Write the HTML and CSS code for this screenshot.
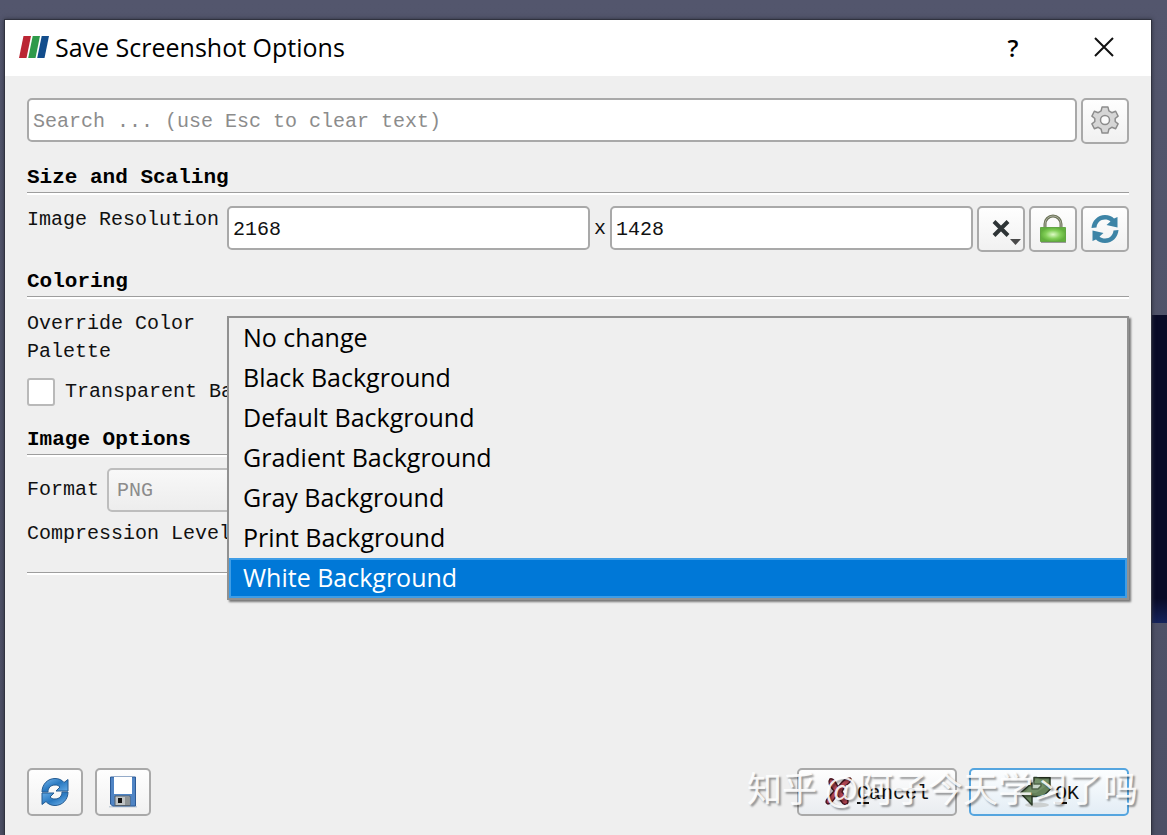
FILE: index.html
```html
<!DOCTYPE html>
<html lang="en">
<head>
<meta charset="utf-8">
<title>Save Screenshot Options</title>
<link rel="stylesheet" href="styles.css">
</head>
<body>
<div class="backdrop"></div>
<main class="dialog">
  <header class="titlebar">
    <svg class="logo" width="30" height="22" viewBox="0 0 30 22" aria-hidden="true">
      <path fill="#bb2634" d="M4.500 0H12L7.500 22H0z"/>
      <path fill="#2f9a4a" d="M13.700 0H21l-4.500 22H9.200z"/>
      <path fill="#124d8c" d="M22.700 0H30l-4.500 22h-7.300z"/>
    </svg>
    <h1 class="title">Save Screenshot Options</h1>
    <button class="caption help" type="button" aria-label="Help">?</button>
    <button class="caption" type="button" aria-label="Close">
      <svg width="22" height="22" viewBox="0 0 22 22"><path d="M2 2l18 18M20 2L2 20" stroke="#111" stroke-width="2"/></svg>
    </button>
  </header>

  <form class="content">
    <div class="row">
      <input class="field" type="text" aria-label="Search" placeholder="Search ... (use Esc to clear text)">
      <button class="tool" type="button" aria-label="Advanced properties">
        <svg width="28" height="30" viewBox="-14 -14 28 30"><path fill="#d6d6d6" stroke="#8c8c8c" stroke-width="1.500" stroke-linejoin="round" d="M-3-13.500h6l1 4 3 2 4-1.500 2.500 5-3 2.500v3l3 2.500-2.500 5-4-1.500-3 2-1 4h-6l-1-4-3-2-4 1.500-2.500-5 3-2.500v-3l-3-2.500 2.500-5 4 1.500 3-2z" transform="scale(.97)"/><circle r="4.500" fill="#fafafa" stroke="#8c8c8c" stroke-width="1.500"/></svg>
      </button>
    </div>

    <h2 class="section first">Size and Scaling</h2>
    <div class="row">
      <label class="name" for="width">Image Resolution</label>
      <input class="field" id="width" type="text" value="2168">
      <span class="times">x</span>
      <input class="field" type="text" aria-label="Image height" value="1428">
      <button class="tool" type="button" aria-label="Scale">
        <svg width="44" height="42" viewBox="0 0 44 42"><path d="M15 13.500l14 14M29 13.500l-14 14" stroke="#2e3436" stroke-width="4"/><path fill="#4a4a4a" d="M31 31h11l-5.500 6z"/></svg>
      </button>
      <button class="tool" type="button" aria-label="Lock aspect ratio">
        <svg width="28" height="30" viewBox="0 0 28 30">
          <defs><radialGradient id="green"><stop offset="0" stop-color="#dcfac4"/><stop offset=".6" stop-color="#82cf58"/><stop offset="1" stop-color="#62b03d"/></radialGradient></defs>
          <path d="M6 15V10a8 8 0 0 1 16 0v5" fill="none" stroke="#6c7358" stroke-width="3"/>
          <path d="M6 14V10a8 8 0 0 1 16 0v4" fill="none" stroke="#a9ad9c" stroke-width="1"/>
          <path d="M2 27h25v2H2z" fill="#9b9b9b"/>
          <path d="M1.500 13.500h25v14h-25z" fill="url(#green)" stroke="#62a544"/>
        </svg>
      </button>
      <button class="tool" type="button" aria-label="Reset resolution">
        <svg width="28" height="30" viewBox="0 0 28 30"><g fill="#3d84a6"><path id="arc" d="M.500 14C1 7 6.500 1 14 1c4 0 7 1.500 9 3.500L26.500 3v10.500L15.500 11l4-3.500C18 6 16 5.500 14 5.500c-5 0-8 3.500-8.500 8z"/><use href="#arc" transform="rotate(180 14 15)"/></g></svg>
      </button>
    </div>

    <h2 class="section">Coloring</h2>
    <div class="row">
      <label class="name" for="palette">Override Color Palette</label>
      <div class="popup-anchor">
        <select class="popup" id="palette" size="7">
          <option>No change</option>
          <option>Black Background</option>
          <option>Default Background</option>
          <option>Gradient Background</option>
          <option>Gray Background</option>
          <option>Print Background</option>
          <option selected>White Background</option>
        </select>
      </div>
    </div>
    <label class="row check"><input class="box" type="checkbox">Transparent Background</label>

    <h2 class="section options">Image Options</h2>
    <div class="row format">
      <label for="format">Format</label>
      <select class="combo" id="format" disabled><option>PNG</option></select>
    </div>
    <div class="compression">Compression Level</div>
    <hr class="rule">

    <footer class="actions">
      <button class="square" type="button" aria-label="Reset to defaults">
        <svg width="28" height="28" viewBox="0 0 28 28"><defs><linearGradient id="blue" x2="1" y2="1"><stop offset="0" stop-color="#7abaf0"/><stop offset=".5" stop-color="#2878c0"/><stop offset="1" stop-color="#68aee8"/></linearGradient></defs><g fill="url(#blue)" stroke="#245a90" stroke-width="1"><path id="turn" d="M1 14C1 6 7 .500 14 .500c4 0 7 1.500 9 4l4-3V13H15l4-4c-1.500-1.500-3-2-5-2-4.500 0-7 3-7 7z"/><use href="#turn" transform="rotate(180 14 14)"/></g></svg>
      </button>
      <button class="square" type="button" aria-label="Save defaults">
        <svg width="28" height="32" viewBox="0 0 28 32"><path d="M0 30h28v1.500H0z" fill="#c5ced8"/><path d="M1.500 1h25v29h-23l-2-2z" fill="#4f84c4" stroke="#2c5a96"/><path d="M5 1h18v17H5z" fill="#fff"/><path d="M6 20h15v9.500H6z" fill="#bfc3c4" stroke="#54606c"/><path d="M9 22h4v5H9z" fill="#111"/><path d="M16 21h4v8h-4z" fill="#8e9394"/></svg>
      </button>
      <span class="spacer"></span>
      <button class="action" type="button">
        <svg width="28" height="30" viewBox="0 0 28 30"><path fill="#ad4450" stroke="#4a1720" stroke-width="1.500" stroke-linejoin="round" d="M5 2c3-1 5 2 8 8 4-5 7-9 12-9 2 1 1 3-1 5-4 3-6 6-7 9 3 3 6 6 6 10-1 4-5 3-7-1l-4-6c-3 4-5 9-9 9-3-1-2-4 0-6l6-7C6 10 2 6 5 2z"/></svg>
        <span class="caption-text"><u>C</u>ancel</span>
      </button>
      <button class="action default" type="submit">
        <svg width="32" height="32" viewBox="0 0 32 32"><ellipse cx="18" cy="29" rx="12" ry="2.500" fill="#ccd0d0"/><path fill="#67845c" stroke="#2d3c28" stroke-width="1.500" stroke-linejoin="round" d="M15 1.500h16v12l-7 7H13V29L1.500 17 13 7v6h6l3-3V8h-7z"/><path d="M17 3h12v6L17 17H6z" fill="#8aa47e" opacity=".4"/></svg>
        <span class="caption-text"><u>O</u>K</span>
      </button>
    </footer>
  </form>
</main>
<div class="watermark" lang="zh">知乎 @阿子今天学习了吗</div>
</body>
</html>
```

FILE: styles.css
```css
* { box-sizing: border-box; }

body {
  margin: 0;
  min-height: 100vh;
  padding: 20px 16px 0 5px;
  display: flex;
  background: linear-gradient(#53566d, #4c4f65);
  color: #111;
  font: 20px/28px "Liberation Mono", monospace;
}

.backdrop {
  position: absolute;
  top: 315px;
  right: 0;
  width: 16px;
  height: 308px;
  background: linear-gradient(#090b27, #090b27 92%, #15235c);
}

.dialog {
  position: relative;
  flex: 1;
  display: flex;
  flex-direction: column;
  background: #efefef;
  box-shadow: 0 0 0 1px #30323f, 0 0 4px 1px #30323f;
}

.titlebar {
  display: flex;
  align-items: center;
  height: 56px;
  padding: 0 13px 2px 14px;
  background: #fff;
  font-family: "Open Sans", sans-serif;
}

.title {
  flex: 1;
  margin: 0 0 0 6px;
  color: #000;
  font-size: 25px;
  font-weight: 400;
}

.caption {
  display: grid;
  place-items: center;
  width: 68px;
  height: 54px;
  padding: 0;
  border: 0;
  background: none;
  color: #000;
  font: 600 24px "Open Sans", sans-serif;
}

.help { margin-right: 23px; }

.content {
  flex: 1;
  display: flex;
  flex-direction: column;
  padding: 22px 22px 19px;
}

.row {
  display: flex;
  align-items: flex-start;
  gap: 4px;
}

.field {
  flex: 1;
  min-width: 0;
  height: 44px;
  padding: 3px 4px 0;
  border: 2px solid #a9a9a9;
  border-radius: 5px;
  background: #fff;
  color: #111;
  font: inherit;
}

.field::placeholder { color: #8c8c8c; opacity: 1; }

.tool, .square, .action {
  display: flex;
  align-items: center;
  justify-content: center;
  padding: 0;
  border: 2px solid #a9a9a9;
  border-radius: 5px;
  background: linear-gradient(#fefefe, #f1f1f1);
  color: #111;
  font: inherit;
}

.tool { width: 48px; height: 46px; }

.section {
  margin: 16px 0 13px;
  border-bottom: 1px solid #9d9d9d;
  box-shadow: 0 2px 0 #fff;
  color: #000;
  font-size: 21px;
  font-weight: 700;
  line-height: 28px;
}

.section.first,
.section.options { margin-top: 20px; }

.name { width: 196px; }
.times { line-height: 46px; }

.popup-anchor {
  position: relative;
  flex: 1;
}

.popup {
  position: absolute;
  top: 6px;
  left: 0;
  width: 100%;
  height: 284px;
  padding: 0;
  overflow: hidden;
  border: 2px solid #919191;
  border-radius: 0;
  outline: 0;
  background: #efefef;
  box-shadow: 2px 2px 2px #777;
  color: #000;
  font: 25px "Open Sans", sans-serif;
}

.popup option {
  height: 40px;
  min-height: 40px;
  padding: 0 12px;
  border: 2px solid transparent;
  line-height: 36px;
}

.popup option:checked {
  border-color: #3f9de6;
  background: linear-gradient(#0078d7, #0078d7);
  color: #fff;
  -webkit-text-fill-color: #fff;
}

.check { gap: 10px; margin-top: 12px; }

.box {
  appearance: none;
  width: 28px;
  height: 28px;
  margin: 0;
  border: 2px solid #b9b9b9;
  border-radius: 3px;
  background: #fff;
}

.format {
  align-items: center;
  gap: 8px;
}

.combo {
  appearance: none;
  width: 240px;
  height: 44px;
  padding: 2px 8px 0;
  border: 2px solid #bdbdbd;
  border-radius: 5px;
  background: linear-gradient(#f8f8f8, #ededed);
  color: #8c8c8c;
  font: inherit;
  opacity: 1;
}

.compression { margin-top: 8px; }

.rule {
  width: 100%;
  margin: 24px 0 0;
  border: 0;
  border-top: 1px solid #9d9d9d;
  border-bottom: 2px solid #fff;
}

.actions {
  display: flex;
  gap: 12px;
  margin-top: auto;
}

.spacer { flex: 1; }
.square { width: 56px; height: 48px; }

.action {
  gap: 4px;
  width: 160px;
  height: 48px;
  background: linear-gradient(#fefefe, #e9ecf0);
}

.action u { text-underline-offset: 3px; }
.caption-text { padding-top: 4px; }
.default { border-color: #55a5df; background: linear-gradient(#fcfeff, #e3edf5); }

.watermark {
  position: absolute;
  right: 29px;
  bottom: 24px;
  color: rgba(255, 255, 255, 0.9);
  font: 35px/48px "Noto Sans CJK SC", sans-serif;
  text-shadow: 2px 2px 2px rgba(0, 0, 0, 0.4);
  white-space: nowrap;
  pointer-events: none;
}
```
